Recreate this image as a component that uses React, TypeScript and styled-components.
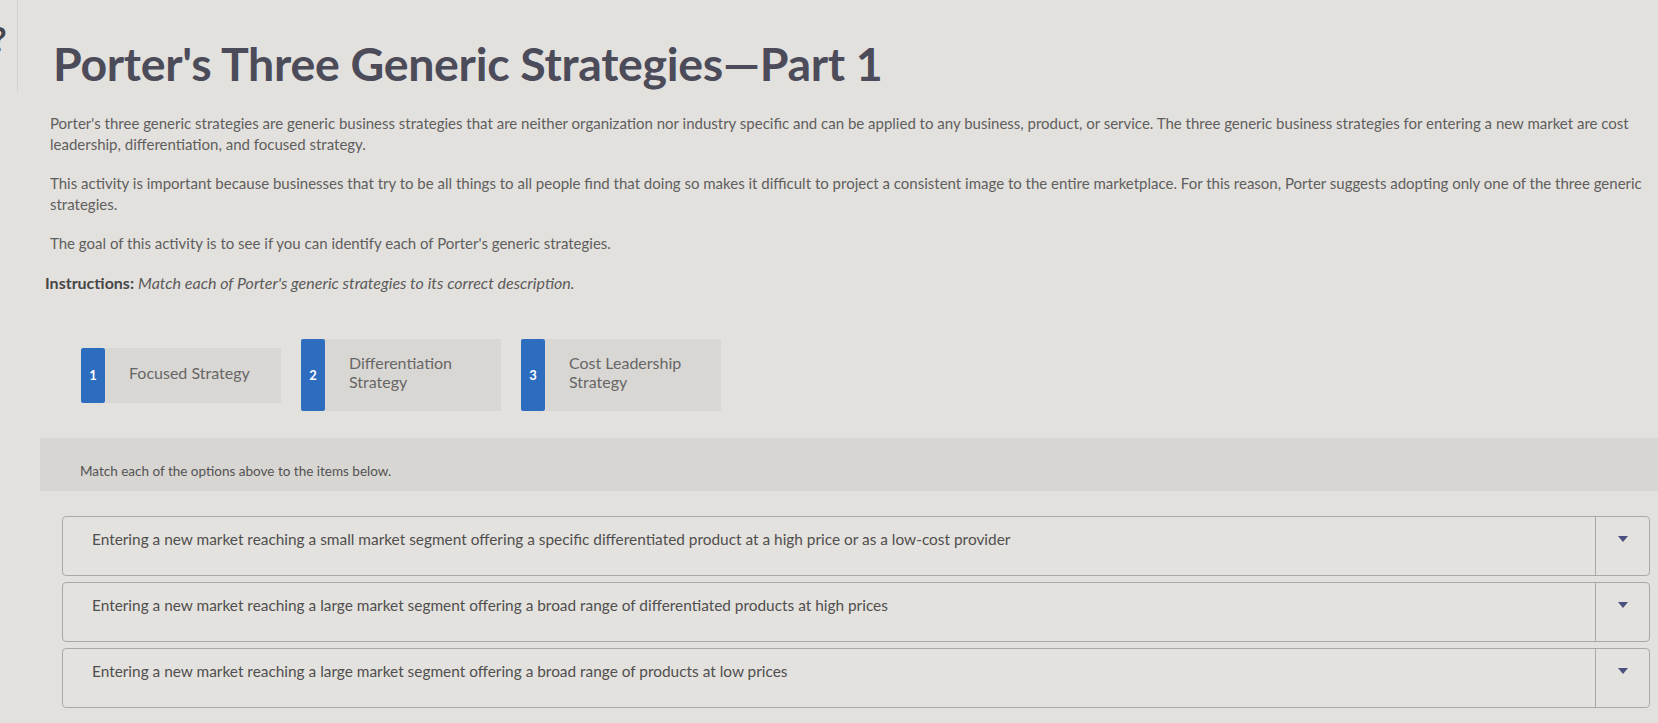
import React from 'react';
import styled, { createGlobalStyle } from 'styled-components';

const GlobalStyle = createGlobalStyle`
    body {
        margin: 0;
        background: #e3e1dd;
        font-family: Lato, "Liberation Sans", sans-serif;
        color: #5f5e5e;
    }
`;

const Page = styled.div`
    display: flex;
    align-items: flex-start;
    min-height: 723px;
`;

const Gutter = styled.div`
    width: 17px;
    height: 92px;
    flex-shrink: 0;
    overflow: hidden;
    border-right: 1px solid #d3d1cd;
`;

// only the tail of the help "?" peeks out of the left rail
const HelpGlyph = styled.div`
    margin: 22px 0 0 -9px;
    font-size: 34px;
    font-weight: 700;
    line-height: 1;
    color: #454550;
`;

const Main = styled.div`
    flex: 1;
    padding-left: 22px;
    padding-top: 35px;
`;

const Title = styled.h1`
    margin: 0 0 21px 13px;
    font-size: 46.5px;
    line-height: 57px;
    font-weight: 700;
    color: #4c4b5a;
    letter-spacing: -0.3px;
    white-space: nowrap;
`;

const Para = styled.p`
    margin: 0 0 18px 10px;
    font-size: 15px;
    line-height: 21px;
    color: #5f5e5e;
    white-space: nowrap;
`;

const Instructions = styled(Para)`
    margin-left: 5px;
    font-size: 16px;
    strong {
        color: #474747;
    }
    em {
        color: #5b5a5a;
    }
`;

const CardRow = styled.div`
    display: flex;
    align-items: center;
    gap: 20px;
    margin: 46px 0 27px 41px;
`;

const Card = styled.div<{ $tall?: boolean }>`
    display: flex;
    width: 200px;
    height: ${(p) => (p.$tall ? '72px' : '55px')};
`;

const Badge = styled.div`
    width: 24px;
    flex-shrink: 0;
    display: flex;
    align-items: center;
    justify-content: center;
    background: #2d6dbf;
    color: #fff;
    font-size: 13px;
    font-weight: 700;
    border-radius: 2px;
`;

const CardBody = styled.div`
    flex: 1;
    display: flex;
    align-items: center;
    padding: 0 12px 6px 24px;
    background: #d9d7d3;
    font-size: 16px;
    line-height: 19px;
    color: #676666;
`;

const Band = styled.div`
    height: 53px;
    box-sizing: border-box;
    padding: 25px 0 0 40px;
    background: #d8d6d2;
    font-size: 13.5px;
    color: #535252;
`;

const RowList = styled.div`
    display: flex;
    flex-direction: column;
    gap: 6px;
    margin: 25px 8px 0 22px;
`;

const MatchRow = styled.div`
    display: flex;
    height: 60px;
    box-sizing: border-box;
    border: 1.5px solid #aaa8a4;
    border-radius: 4px;
    background: #e4e2de;
`;

const RowText = styled.div`
    flex: 1;
    padding: 12px 0 0 29px;
    font-size: 15.4px;
    line-height: 20px;
    color: #504f4f;
`;

const Dropdown = styled.div`
    width: 54px;
    border-left: 1.5px solid #aaa8a4;
    display: flex;
    align-items: flex-start;
    justify-content: center;
    padding-top: 19px;
    box-sizing: border-box;
`;

const Caret = () => (
    <svg width="10" height="6" viewBox="0 0 10 6">
        <path d="M0 0 H10 L5 6 Z" fill="#4b5080" />
    </svg>
);

const strategies = [
    { n: 1, label: 'Focused Strategy', tall: false },
    { n: 2, label: 'Differentiation Strategy', tall: true },
    { n: 3, label: 'Cost Leadership Strategy', tall: true },
];

const items = [
    'Entering a new market reaching a small market segment offering a specific differentiated product at a high price or as a low-cost provider',
    'Entering a new market reaching a large market segment offering a broad range of differentiated products at high prices',
    'Entering a new market reaching a large market segment offering a broad range of products at low prices',
];

export default function App() {
    return (
        <>
            <GlobalStyle />
            <Page>
                <Gutter>
                    <HelpGlyph>?</HelpGlyph>
                </Gutter>
                <Main>
                    <Title>Porter's Three Generic Strategies—Part 1</Title>
                    <Para>
                        Porter's three generic strategies are generic business strategies that are neither organization nor industry specific and can be applied to any business, product, or service. The three generic business strategies for entering a new market are cost
                        <br />
                        leadership, differentiation, and focused strategy.
                    </Para>
                    <Para>
                        This activity is important because businesses that try to be all things to all people find that doing so makes it difficult to project a consistent image to the entire marketplace. For this reason, Porter suggests adopting only one of the three generic
                        <br />
                        strategies.
                    </Para>
                    <Para>The goal of this activity is to see if you can identify each of Porter's generic strategies.</Para>
                    <Instructions>
                        <strong>Instructions:</strong> <em>Match each of Porter's generic strategies to its correct description.</em>
                    </Instructions>

                    <CardRow>
                        {strategies.map((s) => (
                            <Card key={s.n} $tall={s.tall}>
                                <Badge>{s.n}</Badge>
                                <CardBody>{s.label}</CardBody>
                            </Card>
                        ))}
                    </CardRow>

                    <Band>Match each of the options above to the items below.</Band>

                    <RowList>
                        {items.map((text) => (
                            <MatchRow key={text}>
                                <RowText>{text}</RowText>
                                <Dropdown>
                                    <Caret />
                                </Dropdown>
                            </MatchRow>
                        ))}
                    </RowList>
                </Main>
            </Page>
        </>
    );
}
